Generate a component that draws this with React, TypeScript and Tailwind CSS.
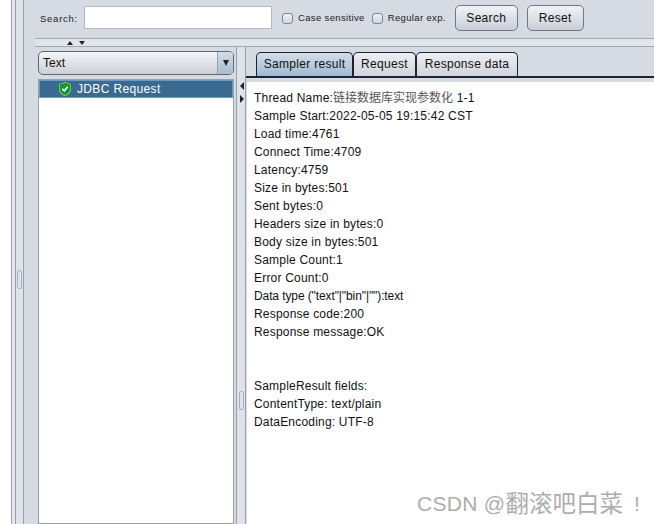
const SANS = 'font-["Liberation_Sans","Noto_Sans_CJK_SC",sans-serif]'

const lines = [
  'Sample Start:2022-05-05 19:15:42 CST',
  'Load time:4761',
  'Connect Time:4709',
  'Latency:4759',
  'Size in bytes:501',
  'Sent bytes:0',
  'Headers size in bytes:0',
  'Body size in bytes:501',
  'Sample Count:1',
  'Error Count:0',
  'Data type ("text"|"bin"|""):text',
  'Response code:200',
  'Response message:OK',
  '',
  '',
  'SampleResult fields:',
  'ContentType: text/plain',
  'DataEncoding: UTF-8',
]

function Check({ label }: { label: string }) {
  return (
    <div className="flex items-center gap-[5px]">
      <span className="h-[11px] w-[11px] rounded-[3px] border border-[#7d8594] bg-gradient-to-b from-[#eef0f4] to-[#d2d6de]" />
      <span className="text-[9.5px] tracking-[0.35px] text-[#1a1a1a]">{label}</span>
    </div>
  )
}

function ToolButton({ label, width }: { label: string; width: string }) {
  return (
    <div
      className={`flex h-[26px] items-center justify-center rounded-[5px] border border-[#6f7786] bg-gradient-to-b from-[#f2f3f6] to-[#c9ced8] text-[12px] tracking-[0.3px] text-[#111] ${width}`}
    >
      {label}
    </div>
  )
}

function Tab({ label, active, width }: { label: string; active?: boolean; width: string }) {
  return (
    <div
      className={`flex h-[24px] items-center justify-center rounded-t-[5px] border border-b-0 border-[#1c2433] pb-px text-[12px] tracking-[0.3px] text-[#111] ${width} ${
        active ? 'bg-gradient-to-b from-[#d5dde7] to-[#9dbad2]' : 'bg-gradient-to-b from-[#eceef2] to-[#d0d4dc]'
      }`}
    >
      {label}
    </div>
  )
}

function Grip() {
  return <span className="h-[19px] w-[5px] rounded-[2px] border border-[#aab0bb] bg-[#dfe2e8]" />
}

function Shield() {
  return (
    <svg width="14" height="16" viewBox="0 0 14 16" className="shrink-0">
      <path d="M7 0.5 L13.5 2.8 V8 C13.5 11.5 10.5 14.2 7 15.5 C3.5 14.2 0.5 11.5 0.5 8 V2.8 Z" fill="#9fcfa8" stroke="#2f5f40" strokeWidth="0.8" />
      <path d="M7 1.8 L12.3 3.6 V8 C12.3 10.9 9.8 13.1 7 14.2 C4.2 13.1 1.7 10.9 1.7 8 V3.6 Z" fill="#0f9a2e" />
      <path d="M4.3 7.8 L6.3 9.8 L9.8 5.7" fill="none" stroke="#f2fff2" strokeWidth="1.7" />
    </svg>
  )
}

export default function App() {
  return (
    <div className={`relative flex h-[524px] w-[654px] overflow-hidden bg-[#d6dae2] text-black ${SANS}`}>
      <div className="w-[11px] shrink-0 bg-white" />
      <div className="flex w-[13px] shrink-0 border-x border-[#9aa0ab] bg-[#e6e8ed] pl-[3px]">
        <div className="flex flex-1 items-center justify-center border-l border-[#9aa0ab] bg-[#dfe2e8] pt-[35px]">
          <Grip />
        </div>
      </div>
      <div className="flex min-w-0 flex-1 flex-col pl-[14px]">
        {/* search bar */}
        <div className="flex h-[38px] shrink-0 items-start pl-[2px] pt-[5px]">
          <span className="mt-[7px] w-[44px] text-[9.5px] tracking-[0.75px] text-[#1a1a1a]">Search:</span>
          <div className="mt-px h-[23px] w-[188px] border border-[#b4b9c3] bg-white" />
          <div className="ml-[10px] mt-[6px] flex gap-[7px]">
            <Check label="Case sensitive" />
            <Check label="Regular exp." />
          </div>
          <div className="ml-[9px] flex gap-[9px]">
            <ToolButton label="Search" width="w-[63px]" />
            <ToolButton label="Reset" width="w-[57px]" />
          </div>
        </div>

        {/* horizontal split */}
        <div className="-ml-[3px] flex h-[9px] shrink-0 items-center gap-[6px] border-y border-[#a3a8b2] bg-[#e2e5ea] pl-[32px]">
          <span className="h-0 w-0 border-x-[3.5px] border-b-[4px] border-x-transparent border-b-[#222]" />
          <span className="h-0 w-0 border-x-[3.5px] border-t-[4px] border-x-transparent border-t-[#222]" />
        </div>

        <div className="flex min-h-0 flex-1">
          {/* tree side */}
          <div className="flex w-[196px] shrink-0 flex-col pt-[4px]">
            <div className="flex h-[24px] shrink-0 overflow-hidden rounded-[5px] border border-[#5f6776] bg-gradient-to-b from-[#f4f5f7] to-[#ccd0d8]">
              <span className="flex-1 pl-[4px] text-[12px] leading-[22px] text-[#111]">Text</span>
              <span className="flex w-[16px] items-center justify-center border-l border-[#9aa3b2] bg-gradient-to-b from-[#d4dce6] to-[#a7bdd2]">
                <span className="h-0 w-0 border-x-[3.5px] border-t-[6px] border-x-transparent border-t-[#222]" />
              </span>
            </div>
            <div className="mt-[4px] flex-1 border border-[#9aa0ab] bg-white">
              <div className="flex h-[18px] items-center gap-[5px] border border-[#6d9ac4] bg-[#3a6a8f] pl-[18px]">
                <Shield />
                <span className="text-[12px] tracking-[0.35px] text-white">JDBC Request</span>
              </div>
            </div>
          </div>

          {/* vertical split */}
          <div className="relative ml-[2px] flex w-[10px] shrink-0 items-center justify-center border-x border-[#9aa0ab] bg-[#dfe2e8] pt-[229px]">
            <Grip />
            <span className="absolute left-[3px] top-[35px] h-0 w-0 border-y-[4px] border-r-[4px] border-y-transparent border-r-[#222]" />
            <span className="absolute left-[3px] top-[48px] h-0 w-0 border-y-[4px] border-l-[4px] border-y-transparent border-l-[#222]" />
          </div>

          {/* result tabs */}
          <div className="flex min-w-0 flex-1 flex-col">
            <div className="flex h-[31px] shrink-0 items-end border-b-2 border-[#1c2433] pl-[10px]">
              <Tab label="Sampler result" active width="w-[97px]" />
              <Tab label="Request" width="w-[63px]" />
              <Tab label="Response data" width="w-[102px]" />
            </div>
            <div className="ml-px mt-[4px] flex-1 bg-white pl-[7px] pt-[7px] text-[12px] leading-[18px] tracking-[0.2px] text-[#111]">
              <div className="whitespace-pre">
                Thread Name:<span className="tracking-normal text-[#555]">链接数据库实现参数化</span> 1-1
              </div>
              {lines.map((line, i) => (
                <div key={i} className={`h-[18px] whitespace-pre ${line.startsWith('Data type') ? 'tracking-[-0.1px]' : ''}`}>
                  {line}
                </div>
              ))}
            </div>
          </div>
        </div>
      </div>

      {/* CSDN watermark */}
      <div className="absolute left-[417px] top-[489px] flex items-center whitespace-nowrap leading-[30px] text-[#adadad]">
        <span className="text-[21px] tracking-[0.3px]">CSDN @</span>
        <span className="text-[23.5px]">翻滚吧白菜</span>
        <span className="ml-[11px] text-[21px]">!</span>
      </div>
    </div>
  )
}
